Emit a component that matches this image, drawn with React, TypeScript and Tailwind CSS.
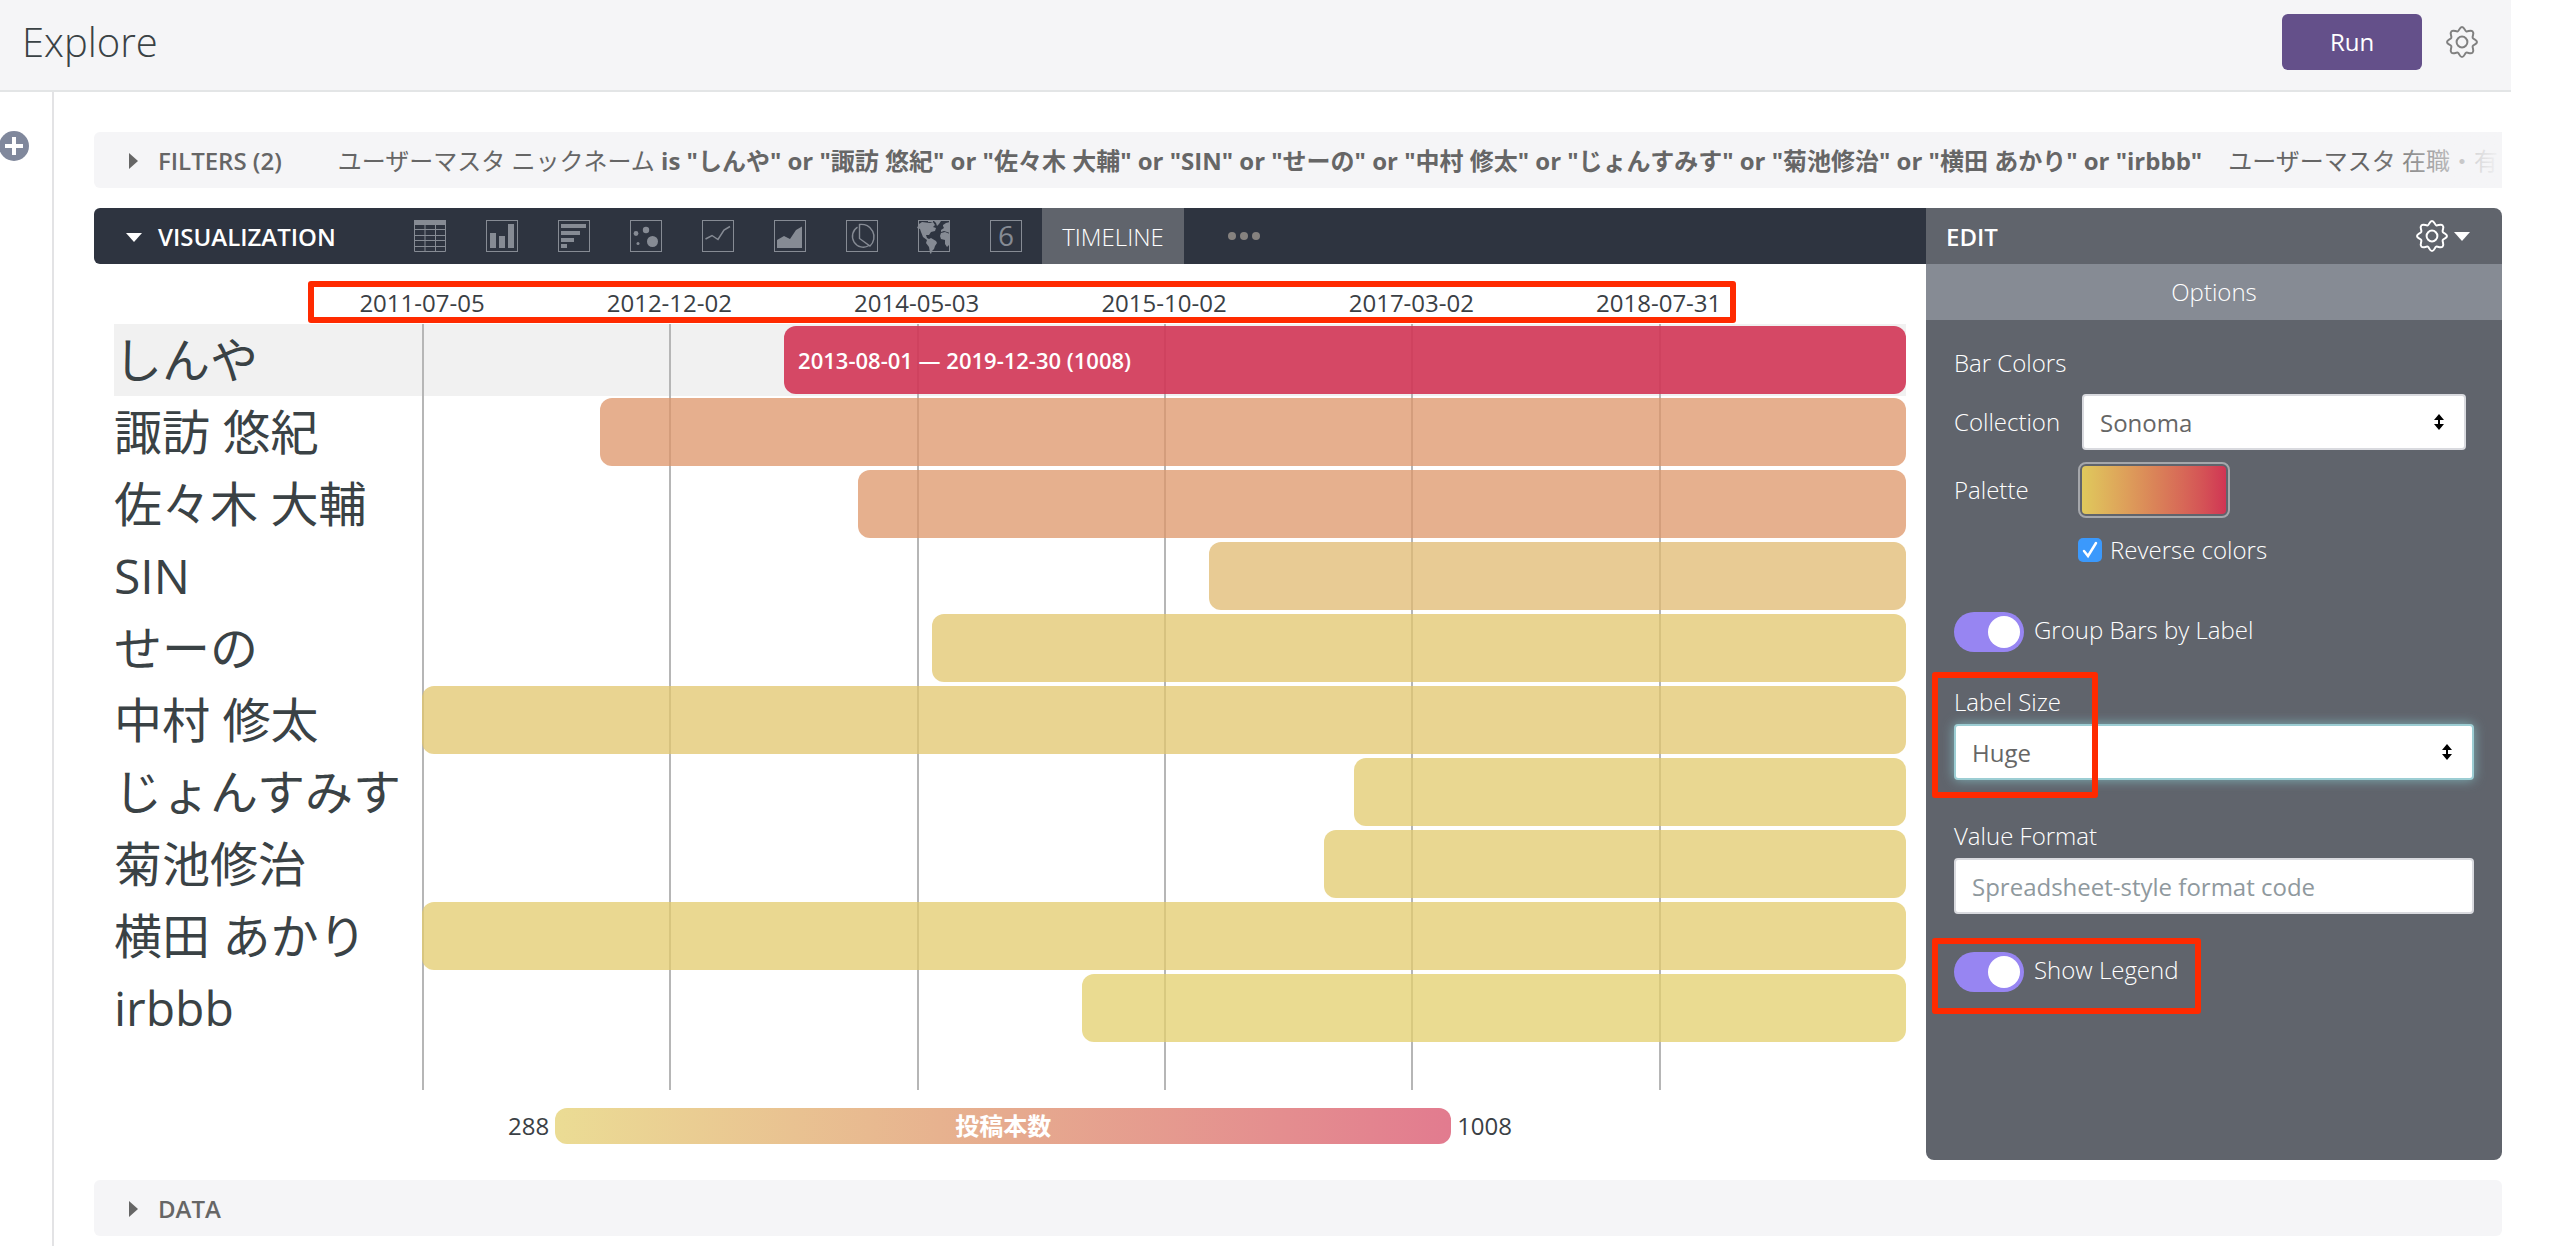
import React, { useState } from 'react';

interface Row {
  label: string;
  start: number;
  color: string;
  text?: string;
}

// start is the offset of the bar inside the plot, in percent
const rows: Row[] = [
  { label: 'しんや', start: 24.4, color: 'bg-[#d13555]/90', text: '2013-08-01 — 2019-12-30 (1008)' },
  { label: '諏訪 悠紀', start: 12, color: 'bg-[#dd9468]/75' },
  { label: '佐々木 大輔', start: 29.4, color: 'bg-[#dd9668]/75' },
  { label: 'SIN', start: 53, color: 'bg-[#e0ba70]/75' },
  { label: 'せーの', start: 34.4, color: 'bg-[#e2c56c]/75' },
  { label: '中村 修太', start: 0, color: 'bg-[#e2c56c]/75' },
  { label: 'じょんすみす', start: 62.8, color: 'bg-[#e2c96c]/75' },
  { label: '菊池修治', start: 60.8, color: 'bg-[#e2c96c]/75' },
  { label: '横田 あかり', start: 0, color: 'bg-[#e3cb6c]/75' },
  { label: 'irbbb', start: 44.5, color: 'bg-[#e3cf6c]/75' },
];

const ticks = ['2011-07-05', '2012-12-02', '2014-05-03', '2015-10-02', '2017-03-02', '2018-07-31'];

const GearIcon = ({ className }: { className: string }) => (
  <svg viewBox="0 0 32 32" className={className} fill="none" stroke="currentColor" strokeWidth="2" strokeLinejoin="round">
    <path d="M16 1C18.4 1 18.6 4.6 20.2 5.3C21.9 6 24.5 3.3 26.6 5.4C28.7 7.5 26 10.1 26.7 11.8C27.4 13.4 31 13.6 31 16C31 18.4 27.4 18.6 26.7 20.2C26 21.9 28.7 24.5 26.6 26.6C24.5 28.7 21.9 26 20.2 26.7C18.6 27.4 18.4 31 16 31C13.6 31 13.4 27.4 11.8 26.7C10.1 26 7.5 28.7 5.4 26.6C3.3 24.5 6 21.9 5.3 20.2C4.6 18.6 1 18.4 1 16C1 13.6 4.6 13.4 5.3 11.8C6 10.1 3.3 7.5 5.4 5.4C7.5 3.3 10.1 6 11.8 5.3C13.4 4.6 13.6 1 16 1Z" />
    <circle cx="16" cy="16" r="5.4" />
  </svg>
);

const Caret = ({ open = false }: { open?: boolean }) => (
  <svg viewBox="0 0 16 16" className="size-4 shrink-0" fill="currentColor">
    {open ? <path d="M0 4h16l-8 9z" /> : <path d="M3 0l9 8-9 8z" />}
  </svg>
);

const Frame = () => <rect x="0.5" y="0.5" width="31" height="31" fill="none" stroke="currentColor" />;

const vizIcons: { name: string; art: React.ReactNode }[] = [
  {
    name: 'Table',
    art: (
      <>
        <path d="M0 0h32v5H0z" />
        <path d="M.5 4v27.5h31V4M0 9.5h32M0 15.5h32M0 20.5h32M0 26.5h32M11 4v28M21.5 4v28" fill="none" stroke="currentColor" />
      </>
    ),
  },
  { name: 'Column', art: <><Frame /><path d="M4 13h6v15H4zM13 16h6v12h-6zM22 4h6v24h-6z" /></> },
  { name: 'Bar', art: <><Frame /><path d="M3 4h25v4H3zM3 11h19v4H3zM3 18h13v4H3zM3 24h6v4H3z" /></> },
  {
    name: 'Scatterplot',
    art: (
      <>
        <Frame />
        <circle cx="6" cy="13.5" r="2.4" />
        <circle cx="16" cy="10" r="3.2" />
        <circle cx="22.5" cy="21.5" r="5.5" />
        <circle cx="8" cy="23.5" r="1.5" />
      </>
    ),
  },
  { name: 'Line', art: <><Frame /><path d="M3.5 19l6.5-3.5 6 4L22 10l6-3.500" fill="none" stroke="currentColor" strokeWidth="1.5" /></> },
  { name: 'Area', art: <><Frame /><path d="M3 28V20l7-4 6 3 6-9 6-3.500V28z" /></> },
  {
    name: 'Pie',
    art: (
      <>
        <Frame />
        <path
          d="M11.5 7.2A10.500 10.500 0 1 0 23 25.5M13.5 4.500V18.500L24 26A12.500 12.500 0 0 0 13.500 4.500z"
          fill="none"
          stroke="currentColor"
          strokeWidth="1.4"
        />
      </>
    ),
  },
  {
    name: 'Map',
    art: (
      <>
        <Frame />
        <path d="M1 4l3-2 8 1 3-1 2 3-2 2 3 1-1 3-4 1-2 3-3 0 1 3 2 1 2-1 5 3 1 2-2 3-1 3-2 2-1 3-1-1-1-6-3-4 1-3-4-3-2-5-1-3-3-1z" />
        <path d="M10 1h5v1h-5zM16 1h7l-2 3-2 2-1-3zM25 5l3-2 4-1v11l-3-1-3-1-3 1 0-2 3-2-1-2zM23 13l4-1 5 2v11h-1l-2 2-2-3v-4l-4-1-1-3z" />
      </>
    ),
  },
  {
    name: 'Single Value',
    art: (
      <>
        <Frame />
        <text x="16" y="26" textAnchor="middle" fontSize="28">6</text>
      </>
    ),
  },
];

// red callout rectangle drawn over the content
const Callout = ({ className }: { className: string }) => (
  <div className={`pointer-events-none absolute z-30 rounded-[3px] border-6 border-[#ff2a00] ${className}`} />
);

const SelectBox = ({ id, options, className }: { id: string; options: string[]; className: string }) => (
  <div className="relative flex-1">
    <select
      id={id}
      className={`block h-14 w-full appearance-none rounded-[4px] border-2 bg-white pt-[2px] pl-4 text-[24px] font-normal text-[#666] outline-none ${className}`}
    >
      {options.map((o) => (
        <option key={o}>{o}</option>
      ))}
    </select>
    <svg viewBox="0 0 10 16" className="pointer-events-none absolute top-5 right-[22px] h-4 w-[10px]">
      <path d="M5 0l5 6H6v4h4l-5 6-5-6h4V6H0z" />
    </svg>
  </div>
);

const Toggle = ({ label }: { label: string }) => {
  const [on, setOn] = useState(true);
  return (
    <label className="flex h-10 cursor-pointer gap-[10px]">
      <input type="checkbox" className="peer sr-only" checked={on} onChange={(e) => setOn(e.target.checked)} />
      <span className="flex h-10 w-[70px] rounded-full bg-[#868b94] p-1 peer-checked:justify-end peer-checked:bg-[#9785f2]">
        <span className="size-8 rounded-full bg-white" />
      </span>
      <span className="leading-9">{label}</span>
    </label>
  );
};

const Timeline = () => (
  <div className="relative px-5 pb-4">
    <div className="flex h-[60px] items-center pt-[18px] text-[#3a4045]">
      <div className="w-[308px]" />
      <div className="grid flex-1 grid-cols-6">
        {ticks.map((t) => (
          <div key={t} className="flex w-0 justify-center">
            <span className="whitespace-nowrap">{t}</span>
          </div>
        ))}
      </div>
    </div>
    <Callout className="top-[17px] right-[190px] left-[214px] h-[42px]" />

    <div className="relative pb-[46px]">
      {rows.map((row, i) => (
        <div key={row.label} className={`flex h-[72px] items-center ${i === 0 ? 'bg-[#f1f1f1]' : ''}`}>
          <div className="w-[308px] text-[48px] leading-[72px] whitespace-nowrap text-[#3a4245]">{row.label}</div>
          <div className="relative z-20 flex-1">
            <div
              className={`flex h-[68px] items-center rounded-xl pl-[14px] text-[22px] font-semibold text-white ${row.color}`}
              style={{ marginLeft: `${row.start}%` }}
            >
              {row.text}
            </div>
          </div>
        </div>
      ))}
      <div className="pointer-events-none absolute inset-y-0 right-0 left-[308px] z-10 grid grid-cols-6">
        {ticks.map((t) => (
          <div key={t} className="border-l-2 border-[#b6b6b6]" />
        ))}
      </div>
    </div>

    <div className="mt-[18px] flex h-9 items-center justify-center gap-[6px] text-[#3a4045]">
      <span>288</span>
      <div className="flex h-9 w-1/2 items-center justify-center rounded-xl bg-linear-to-r from-[#ebdc94] via-[#e6ab8e] to-[#e27b8f] font-bold text-white">
        投稿本数
      </div>
      <span>1008</span>
    </div>
  </div>
);

const EditPanel = () => {
  const [reverse, setReverse] = useState(true);
  return (
    <aside className="relative flex w-[576px] flex-col overflow-hidden rounded-r-lg rounded-bl-lg bg-[#60646c] font-light text-white">
      <div className="flex h-14 items-center pr-8 pl-5">
        <h2 className="flex-1 pt-[2px] font-semibold">EDIT</h2>
        <button aria-label="Edit settings" className="flex items-center gap-[6px]">
          <GearIcon className="size-8" />
          <Caret open />
        </button>
      </div>
      <button className="h-14 bg-[#868b94]">Options</button>

      <div className="flex flex-col px-7 pt-6">
        <p className="leading-[38px]">Bar Colors</p>
        <div className="mt-3 flex items-center pr-2">
          <label htmlFor="collection" className="w-32">Collection</label>
          <SelectBox id="collection" options={['Sonoma']} className="border-[#d9dadf]" />
        </div>
        <div className="mt-3 flex items-center">
          <span className="w-[124px]">Palette</span>
          <button aria-label="Palette" className="h-14 w-38 rounded-lg border-2 border-[#a5a7ab] p-[2px]">
            <span className="block h-full rounded-[4px] bg-linear-to-r from-[#dfc95c] via-[#da8458] to-[#d03454]" />
          </button>
        </div>
        <label className="mt-[14px] ml-[124px] flex h-9 items-center gap-2">
          <input type="checkbox" className="peer sr-only" checked={reverse} onChange={(e) => setReverse(e.target.checked)} />
          <svg viewBox="0 0 24 24" className="size-6 rounded-[5px] bg-white peer-checked:bg-[#3b99fc]">
            <path d="M6 13l4 5 8-13" fill="none" stroke="#fff" strokeWidth="2.5" strokeLinecap="round" />
          </svg>
          Reverse colors
        </label>
        <div className="mt-11">
          <Toggle label="Group Bars by Label" />
        </div>
        <div className="relative mt-[30px]">
          <label htmlFor="label-size" className="block pt-[2px] pb-1 leading-9">Label Size</label>
          <SelectBox
            id="label-size"
            options={['Huge']}
            className="border-[#9ccdd3] shadow-[0_0_12px_rgba(140,210,215,0.7)]"
          />
          <Callout className="-top-[10px] -bottom-[18px] -left-[22px] w-[166px]" />
        </div>
        <label htmlFor="value-format" className="mt-9 pt-[2px] pb-1 leading-9">Value Format</label>
        <input
          id="value-format"
          placeholder="Spreadsheet-style format code"
          className="h-14 rounded-[4px] border-2 border-[#d9dadf] bg-white px-4 text-[24px] font-normal text-[#666] placeholder:text-[#8f999e]"
        />
        <div className="relative mt-[38px] self-start">
          <Toggle label="Show Legend" />
          <Callout className="-top-[14px] -right-[22px] -bottom-[22px] -left-[22px]" />
        </div>
      </div>
    </aside>
  );
};

export default function App() {
  return (
    <div className="flex min-h-screen flex-col bg-white font-['Open_Sans','Noto_Sans_CJK_JP',sans-serif] text-[24px] leading-8">
      <header className="mr-[41px] flex h-[92px] items-center border-b-2 border-[#e3e5e6] bg-[#f5f5f7] pr-[33px] pb-[6px] pl-[22px]">
        <h1 className="flex-1 text-[40px] font-light text-[#3a4245]">Explore</h1>
        <button className="mr-6 h-14 w-[140px] rounded-md bg-[#64508a] text-white">Run</button>
        <button aria-label="Settings" className="text-[#808080]">
          <GearIcon className="size-8" />
        </button>
      </header>

      <div className="flex flex-1">
        <nav className="w-[54px] shrink-0 border-r-2 border-[#e3e3e5] pt-[39px]">
          <button aria-label="Expand" className="block h-[30px] w-[29px] text-white">
            <svg viewBox="1 0 29 30" className="h-[30px] w-[29px]" stroke="currentColor" strokeWidth="4">
              <circle cx="15" cy="15" r="15" fill="#80889c" stroke="none" />
              <path d="M15 6v18M6 15h18" />
            </svg>
          </button>
        </nav>

        <main className="flex min-w-0 flex-1 flex-col gap-5 pt-10 pr-[50px] pl-10">
          <section className="relative flex h-14 items-center rounded-md bg-[#f5f5f7] pt-[2px] pl-8 whitespace-nowrap text-[#666]">
            <button className="flex items-center gap-4 font-semibold">
              <Caret />
              FILTERS (2)
            </button>
            <p className="ml-14">
              ユーザーマスタ ニックネーム{' '}
              <b>
                is "しんや" or "諏訪 悠紀" or "佐々木 大輔" or "SIN" or "せーの" or "中村 修太" or "じょんすみす" or "菊池修治" or
                "横田 あかり" or "irbbb"
              </b>
            </p>
            <p className="ml-[26px]">ユーザーマスタ 在職・有</p>
            <div className="absolute inset-y-0 right-0 w-32 bg-linear-to-r from-transparent to-[#f5f5f7]" />
          </section>

          <section className="flex">
            <div className="min-w-0 flex-1">
              <div className="flex h-14 items-center rounded-l-md bg-[#2e3440] pl-8 text-white">
                <button className="flex w-[268px] items-center gap-4 pt-[2px] font-semibold">
                  <Caret open />
                  VISUALIZATION
                </button>
                {vizIcons.map((icon) => (
                  <button key={icon.name} aria-label={icon.name} className="w-[72px] pl-5 text-[#868b94]">
                    <svg viewBox="0 0 32 32" className="size-8 overflow-visible" fill="currentColor">
                      {icon.art}
                    </svg>
                  </button>
                ))}
                <button className="h-14 w-[142px] bg-[#60646c] pt-[2px] font-light">TIMELINE</button>
                <button aria-label="More" className="ml-11 flex gap-1">
                  <span className="size-2 rounded-full bg-[#86827f]" />
                  <span className="size-2 rounded-full bg-[#86827f]" />
                  <span className="size-2 rounded-full bg-[#86827f]" />
                </button>
              </div>
              <Timeline />
            </div>
            <EditPanel />
          </section>

          <section className="flex h-14 items-center rounded-md bg-[#f5f5f7] pt-[2px] pl-8 text-[#666]">
            <button className="flex items-center gap-4 font-semibold">
              <Caret />
              DATA
            </button>
          </section>
        </main>
      </div>
    </div>
  );
}
